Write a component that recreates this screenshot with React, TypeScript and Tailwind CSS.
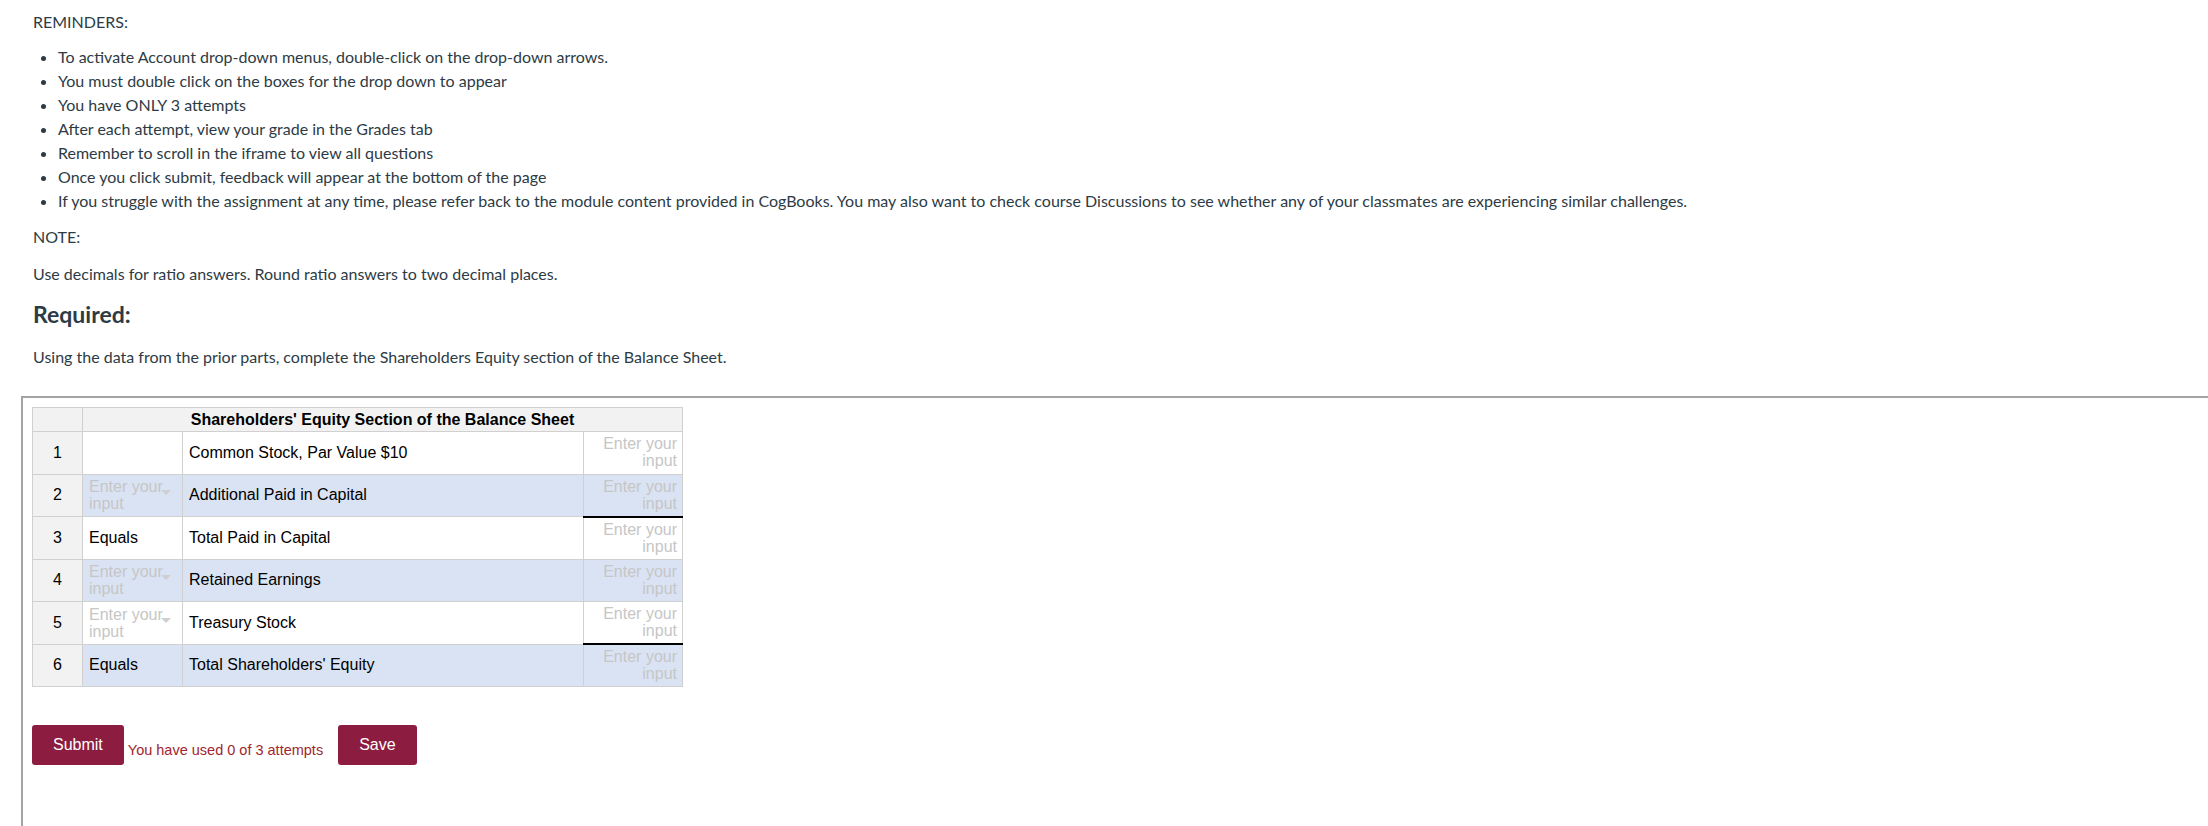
import React from 'react';

const reminders = [
  'To activate Account drop-down menus, double-click on the drop-down arrows.',
  'You must double click on the boxes for the drop down to appear',
  'You have ONLY 3 attempts',
  'After each attempt, view your grade in the Grades tab',
  'Remember to scroll in the iframe to view all questions',
  'Once you click submit, feedback will appear at the bottom of the page',
  'If you struggle with the assignment at any time, please refer back to the module content provided in CogBooks. You may also want to check course Discussions to see whether any of your classmates are experiencing similar challenges.',
];

type Row = {
  n: number;
  left: 'empty' | 'select' | 'equals';
  label: string;
  blue: boolean;
  underline: boolean;
};

const rows: Row[] = [
  { n: 1, left: 'empty', label: 'Common Stock, Par Value $10', blue: false, underline: false },
  { n: 2, left: 'select', label: 'Additional Paid in Capital', blue: true, underline: true },
  { n: 3, left: 'equals', label: 'Total Paid in Capital', blue: false, underline: false },
  { n: 4, left: 'select', label: 'Retained Earnings', blue: true, underline: false },
  { n: 5, left: 'select', label: 'Treasury Stock', blue: false, underline: true },
  { n: 6, left: 'equals', label: "Total Shareholders' Equity", blue: true, underline: false },
];

function Placeholder({ right }: { right?: boolean }) {
  return (
    <div className={`text-[16px] leading-[17px] text-[#c6c6c6] ${right ? 'text-right' : 'text-left'}`}>
      Enter your
      <br />
      input
    </div>
  );
}

function SelectCell() {
  return (
    <div className="relative px-[6px]">
      <Placeholder />
      {/* select arrow */}
      <svg className="absolute left-[78px] top-[12px]" width="10" height="5" viewBox="0 0 10 5">
        <path d="M0 0 L10 0 L5 5 Z" fill="#cfcfcf" />
      </svg>
    </div>
  );
}

export default function App() {
  return (
    <div className="w-[2208px] h-[826px] overflow-hidden bg-white" style={{ fontFamily: 'Lato, "Noto Sans", sans-serif' }}>
      <div className="px-[33px] pt-[10px] text-[16px] leading-[24px] text-[#2d3b45]">
        <p>REMINDERS:</p>
        <ul className="mt-[11px] pl-[25px] list-disc">
          {reminders.map((r) => (
            <li key={r}>{r}</li>
          ))}
        </ul>
        <p className="mt-[12px]">NOTE:</p>
        <p className="mt-[13px]">Use decimals for ratio answers. Round ratio answers to two decimal places.</p>
        <h3 className="mt-[14px] text-[23px] leading-[28px] font-bold">Required:</h3>
        <p className="mt-[17px]">Using the data from the prior parts, complete the Shareholders Equity section of the Balance Sheet.</p>
      </div>

      {/* iframe */}
      <div
        className="mt-[27px] ml-[21px] h-[440px] border-t-2 border-l-2 border-[#a3a3a3] pt-[9px] pl-[9px]"
        style={{ fontFamily: '"Liberation Sans", Arial, sans-serif' }}
      >
        <table className="border-collapse text-[16px] text-black">
          <colgroup>
            <col className="w-[50px]" />
            <col className="w-[100px]" />
            <col className="w-[401px]" />
            <col className="w-[99px]" />
          </colgroup>
          <thead>
            <tr className="h-[24px] bg-[#f2f2f2]">
              <th className="border border-[#d0d0d0]" />
              <th colSpan={3} className="border border-[#d0d0d0] font-bold text-center leading-[20px]">
                Shareholders' Equity Section of the Balance Sheet
              </th>
            </tr>
          </thead>
          <tbody>
            {rows.map((r) => {
              const bg = r.blue ? 'bg-[#dae3f3]' : 'bg-white';
              return (
                <tr key={r.n} className="h-[42.5px]">
                  <td className="border border-[#d0d0d0] bg-[#f2f2f2] text-center align-middle">{r.n}</td>
                  <td className={`border border-[#d0d0d0] align-middle p-0 ${bg}`}>
                    {r.left === 'select' && <SelectCell />}
                    {r.left === 'equals' && <span className="px-[6px]">Equals</span>}
                  </td>
                  <td className={`border border-[#d0d0d0] align-middle px-[6px] ${bg}`}>{r.label}</td>
                  <td
                    className={`border border-[#d0d0d0] align-top pt-[3px] pr-[5px] pl-0 ${bg} ${
                      r.underline ? 'border-b-2 border-b-black' : ''
                    }`}
                  >
                    <Placeholder right />
                  </td>
                </tr>
              );
            })}
          </tbody>
        </table>

        <div className="mt-[38px] flex items-start">
          <button className="h-[40px] px-[21px] rounded-[3px] bg-[#8c1d40] text-white text-[16px]">Submit</button>
          <span className="mt-[17px] ml-[4px] text-[14.5px] leading-[17px] text-[#a0262e]">You have used 0 of 3 attempts</span>
          <button className="ml-[15px] h-[40px] px-[21px] rounded-[3px] bg-[#8c1d40] text-white text-[16px]">Save</button>
        </div>
      </div>
    </div>
  );
}
